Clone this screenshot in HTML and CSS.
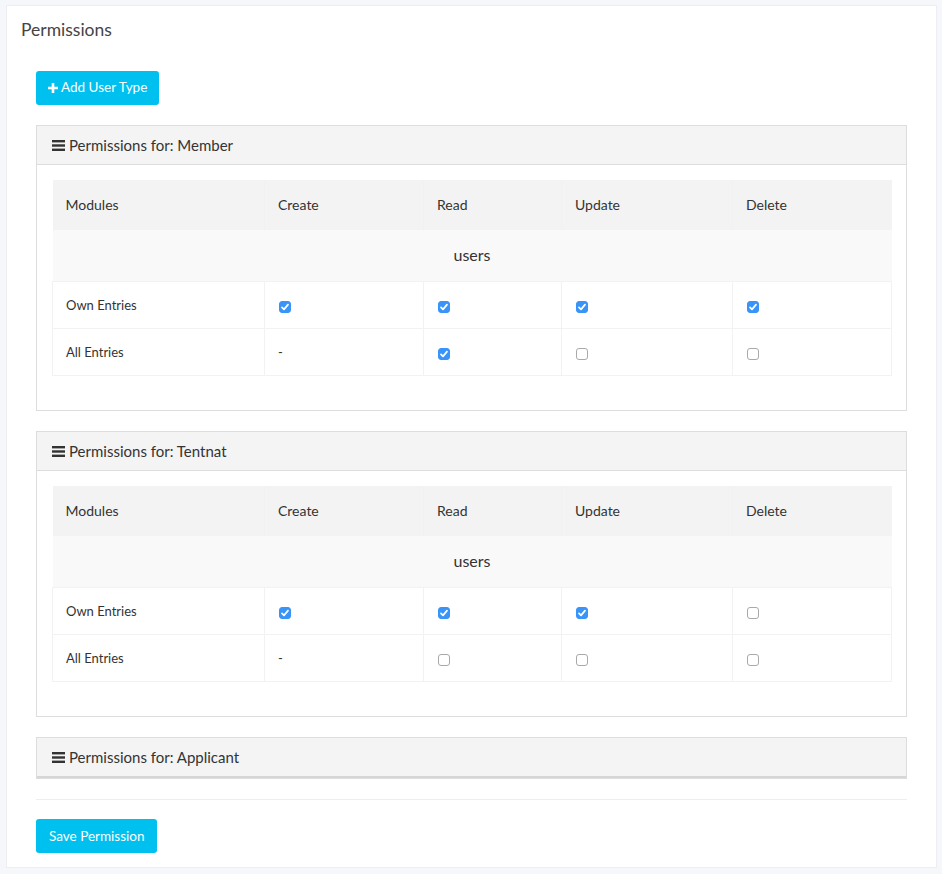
FILE: index.html
```html
<!DOCTYPE html>
<html>
<head>
<meta charset="utf-8">
<link rel="stylesheet" href="styles.css">
</head>
<body>
<div class="card">
  <h3 class="card-title">Permissions</h3>
  <div class="card-body">
    <button class="btn btn-info add-btn"><svg class="plus" viewBox="0 0 10 10" width="10" height="10"><path d="M3.7 0h2.6v3.7H10v2.6H6.3V10H3.7V6.3H0V3.7h3.7z" fill="#fff"/></svg>Add User Type</button>

    <div class="panel">
      <div class="panel-heading"><svg class="bars" viewBox="0 0 13 11" width="13" height="11"><rect y="0" width="13" height="2.4" fill="#333"/><rect y="4.3" width="13" height="2.4" fill="#333"/><rect y="8.6" width="13" height="2.4" fill="#333"/></svg>Permissions for: Member</div>
      <div class="panel-body">
        <table class="perm">
          <colgroup><col class="c1"><col class="c2"><col class="c3"><col class="c4"><col class="c5"></colgroup>
          <thead><tr><th>Modules</th><th>Create</th><th>Read</th><th>Update</th><th>Delete</th></tr></thead>
          <tbody>
            <tr class="module"><td colspan="5">users</td></tr>
            <tr><td>Own Entries</td><td><input type="checkbox" checked></td><td><input type="checkbox" checked></td><td><input type="checkbox" checked></td><td><input type="checkbox" checked></td></tr>
            <tr><td>All Entries</td><td>-</td><td><input type="checkbox" checked></td><td><input type="checkbox"></td><td><input type="checkbox"></td></tr>
          </tbody>
        </table>
      </div>
    </div>

    <div class="panel">
      <div class="panel-heading"><svg class="bars" viewBox="0 0 13 11" width="13" height="11"><rect y="0" width="13" height="2.4" fill="#333"/><rect y="4.3" width="13" height="2.4" fill="#333"/><rect y="8.6" width="13" height="2.4" fill="#333"/></svg>Permissions for: Tentnat</div>
      <div class="panel-body">
        <table class="perm">
          <colgroup><col class="c1"><col class="c2"><col class="c3"><col class="c4"><col class="c5"></colgroup>
          <thead><tr><th>Modules</th><th>Create</th><th>Read</th><th>Update</th><th>Delete</th></tr></thead>
          <tbody>
            <tr class="module"><td colspan="5">users</td></tr>
            <tr><td>Own Entries</td><td><input type="checkbox" checked></td><td><input type="checkbox" checked></td><td><input type="checkbox" checked></td><td><input type="checkbox"></td></tr>
            <tr><td>All Entries</td><td>-</td><td><input type="checkbox"></td><td><input type="checkbox"></td><td><input type="checkbox"></td></tr>
          </tbody>
        </table>
      </div>
    </div>

    <div class="panel collapsed">
      <div class="panel-heading"><svg class="bars" viewBox="0 0 13 11" width="13" height="11"><rect y="0" width="13" height="2.4" fill="#333"/><rect y="4.3" width="13" height="2.4" fill="#333"/><rect y="8.6" width="13" height="2.4" fill="#333"/></svg>Permissions for: Applicant</div>
    </div>

    <hr class="sep">
    <button class="btn btn-info save-btn">Save Permission</button>
  </div>
</div>
</body>
</html>
```

FILE: styles.css
```css
html, body {
  margin: 0;
  padding: 0;
  background: #f6f7fa;
}
body {
  font-family: "Source Sans Pro", Lato, "Noto Sans", sans-serif;
  color: #333;
  padding: 5px 5px 6px 6px;
}
.card {
  background: #fff;
  border: 1px solid #eceef1;
  padding-bottom: 14px;
}
.card-title {
  margin: 0;
  padding: 11px 14px 0;
  font-size: 17.5px;
  line-height: 26px;
  font-weight: 400;
  color: #444;
}
.card-body {
  padding: 28px 29px 0;
}
.btn {
  display: inline-flex;
  align-items: center;
  font-family: inherit;
  font-size: 13.5px;
  line-height: 19px;
  padding: 7px 12px;
  border: 0;
  border-radius: 3px;
  cursor: pointer;
}
.btn-info {
  background: #00c0ef;
  color: #fff;
}
.add-btn {
  padding: 7px 12px 8px;
}
.plus {
  margin-right: 3px;
}
.panel {
  margin-top: 20px;
  border: 1px solid #dddddd;
  background: #fff;
}
.panel-heading {
  display: flex;
  align-items: center;
  background: #f4f4f4;
  border-bottom: 1px solid #dddddd;
  padding: 9px 15px 8px;
  font-size: 15px;
  line-height: 21px;
  color: #333;
}
.collapsed .panel-heading {
  border-bottom: 2px solid #d6d6d6;
}
.bars {
  margin-right: 4px;
}
.panel-body {
  padding: 15px 15px 15px;
}
.perm {
  width: 100%;
  border-collapse: collapse;
  margin-bottom: 19px;
  table-layout: fixed;
}
.c1 { width: 212px; }
.c2 { width: 159px; }
.c3 { width: 138px; }
.c4 { width: 171px; }
.c5 { width: 159px; }
.perm th {
  background: #f3f3f3;
  text-align: left;
  font-weight: 400;
  font-size: 14px;
  line-height: 20px;
  padding: 15px 13px 15px;
  color: #333;
  border-left: 1px solid #f1f1f1;
}
.perm th:first-child { border-left: 0; }
.perm td {
  border: 1px solid #f2f2f2;
  font-size: 13px;
  line-height: 19px;
  padding: 14px 13px 13px;
  color: #333;
  vertical-align: middle;
}
.perm tr.module td {
  background: #f9f9f9;
  text-align: center;
  font-size: 16px;
  line-height: 22px;
  padding: 14px 13px 15px;
  border-top: 0;
  border-left: 0;
  border-right: 0;
}
.perm input[type="checkbox"] {
  -webkit-appearance: none;
  appearance: none;
  width: 12px;
  height: 12px;
  margin: 0 0 0 1px;
  border: 1px solid #a9a9a9;
  border-radius: 3px;
  background: #fff;
  display: inline-block;
  vertical-align: middle;
  position: relative;
  top: 0;
}
.perm input[type="checkbox"]:checked {
  border-color: #3994f8;
  background: #3994f8 url("data:image/svg+xml;utf8,<svg xmlns='http://www.w3.org/2000/svg' viewBox='0 0 12 12'><path d='M3 6.3l2 2.1L9 3.6' fill='none' stroke='white' stroke-width='1.7' stroke-linecap='round' stroke-linejoin='round'/></svg>") center/12px 12px no-repeat;
}
.sep {
  border: 0;
  border-top: 1px solid #eeeeee;
  margin: 20px 0 19px;
}
.save-btn {
  padding: 8px 13px 7px;
}
```
